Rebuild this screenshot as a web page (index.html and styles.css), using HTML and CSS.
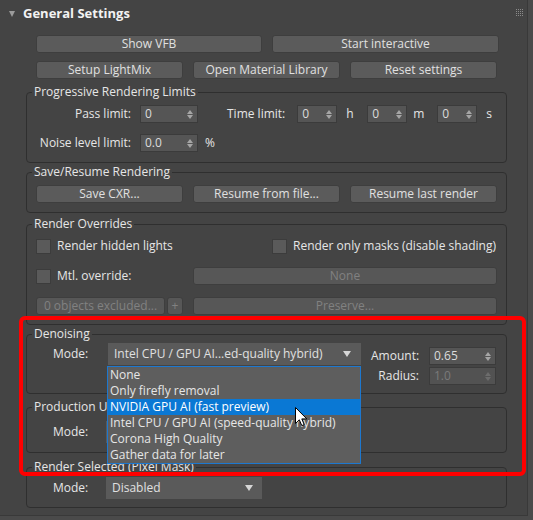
FILE: index.html
```html
<!DOCTYPE html>
<html>
<head>
<meta charset="utf-8">
<link rel="stylesheet" href="styles.css">
</head>
<body>
<div class="panel">
  <div class="title">
    <span class="tri"></span>
    <span class="title-text">General Settings</span>
    <svg class="grip" width="8" height="8" viewBox="0 0 8 8">
      <g fill="#8a8a8a">
        <rect x="0" y="0" width="1" height="1"/><rect x="2" y="0" width="1" height="1"/><rect x="4" y="0" width="1" height="1"/><rect x="6" y="0" width="1" height="1"/>
        <rect x="0" y="2" width="1" height="1"/><rect x="2" y="2" width="1" height="1"/><rect x="4" y="2" width="1" height="1"/><rect x="6" y="2" width="1" height="1"/>
        <rect x="0" y="4" width="1" height="1"/><rect x="2" y="4" width="1" height="1"/><rect x="4" y="4" width="1" height="1"/><rect x="6" y="4" width="1" height="1"/>
        <rect x="0" y="6" width="1" height="1"/><rect x="2" y="6" width="1" height="1"/><rect x="4" y="6" width="1" height="1"/><rect x="6" y="6" width="1" height="1"/>
      </g>
    </svg>
  </div>

  <div class="btnrow top1">
    <button class="btn wide-a">Show VFB</button>
    <button class="btn wide-b">Start interactive</button>
  </div>
  <div class="btnrow top2">
    <button class="btn third">Setup LightMix</button>
    <button class="btn third">Open Material Library</button>
    <button class="btn third">Reset settings</button>
  </div>

  <fieldset class="group g-prog">
    <legend>Progressive Rendering Limits</legend>
    <div class="prow">
      <span class="plabel">Pass limit:</span>
      <div class="spin sp-58"><span class="val">0</span><span class="arrows"><i class="up"></i><i class="dn"></i></span></div>
      <span class="tlabel">Time limit:</span>
      <div class="spin sp-40"><span class="val">0</span><span class="arrows"><i class="up"></i><i class="dn"></i></span></div>
      <span class="unit u-h">h</span>
      <div class="spin sp-40"><span class="val">0</span><span class="arrows"><i class="up"></i><i class="dn"></i></span></div>
      <span class="unit u-m">m</span>
      <div class="spin sp-40"><span class="val">0</span><span class="arrows"><i class="up"></i><i class="dn"></i></span></div>
      <span class="unit u-s">s</span>
    </div>
    <div class="prow r2">
      <span class="plabel">Noise level limit:</span>
      <div class="spin sp-58"><span class="val">0.0</span><span class="arrows"><i class="up"></i><i class="dn"></i></span></div>
      <span class="unit u-pct">%</span>
    </div>
  </fieldset>

  <fieldset class="group g-save">
    <legend>Save/Resume Rendering</legend>
    <div class="btnrow inner">
      <button class="btn third">Save CXR...</button>
      <button class="btn third">Resume from file...</button>
      <button class="btn third">Resume last render</button>
    </div>
  </fieldset>

  <fieldset class="group g-over">
    <legend>Render Overrides</legend>
    <div class="orow o1">
      <label class="chk c-first"><span class="box"></span>Render hidden lights</label>
      <label class="chk c-second"><span class="box"></span><span class="clip">Render only masks (disable shading)</span></label>
    </div>
    <div class="orow o2">
      <label class="chk c-mtl"><span class="box"></span>Mtl. override:</label>
      <button class="btn dis long">None</button>
    </div>
    <div class="orow o3">
      <button class="btn dis excl">0 objects excluded...</button>
      <button class="btn dis plus">+</button>
      <button class="btn dis long">Preserve...</button>
    </div>
  </fieldset>

  <fieldset class="group g-den">
    <legend>Denoising</legend>
    <div class="drow">
      <span class="mlabel">Mode:</span>
      <div class="combo c-den">
        <span class="ctext">Intel CPU / GPU AI...ed-quality hybrid)</span>
        <span class="carrow"></span>
        <ul class="dropdown">
          <li>None</li>
          <li>Only firefly removal</li>
          <li class="sel">NVIDIA GPU AI (fast preview)</li>
          <li>Intel CPU / GPU AI (speed-quality hybrid)</li>
          <li>Corona High Quality</li>
          <li>Gather data for later</li>
        </ul>
      </div>
      <div class="rcol">
        <div class="rrow">
          <span class="rlabel">Amount:</span>
          <div class="spin sp-67"><span class="val">0.65</span><span class="arrows"><i class="up"></i><i class="dn"></i></span></div>
        </div>
        <div class="rrow">
          <span class="rlabel">Radius:</span>
          <div class="spin sp-67 sdis"><span class="val">1.0</span><span class="arrows"><i class="up"></i><i class="dn"></i></span></div>
        </div>
      </div>
    </div>
  </fieldset>

  <fieldset class="group g-prod">
    <legend>Production U</legend>
    <div class="drow">
      <span class="mlabel short">Mode:</span>
      <div class="combo c-small"></div>
    </div>
  </fieldset>

  <fieldset class="group g-sel">
    <legend>Render Selected (Pixel Mask)</legend>
    <div class="drow">
      <span class="mlabel short">Mode:</span>
      <div class="combo c-small">
        <span class="ctext">Disabled</span>
        <span class="carrow"></span>
      </div>
    </div>
  </fieldset>

  <div class="highlight"></div>

  <svg class="cursor" width="13" height="20" viewBox="0 0 13 20">
    <path d="M0.5 0.5 L0.5 16.5 L4.3 12.8 L6.8 18.6 L9.2 17.6 L6.8 11.9 L11.8 11.9 Z" fill="#ffffff" stroke="#000000" stroke-width="1" stroke-linejoin="miter"/>
  </svg>
</div>
</body>
</html>
```

FILE: styles.css
```css
html, body {
  margin: 0;
  padding: 0;
}

body {
  background: #4a4a4a;
  font-family: "Open Sans", "Noto Sans", "DejaVu Sans", sans-serif;
  font-size: 12px;
  line-height: 16px;
  color: #e6e6e6;
}

.panel {
  position: relative;
  width: 528px;
  height: 516px;
  box-sizing: border-box;
  background: #444444;
  border-right: 1px solid #393939;
  border-bottom: 1px solid #393939;
  overflow: hidden;
}

/* Title */
.title {
  height: 26px;
  display: flex;
  align-items: center;
  padding-left: 9px;
}

.tri {
  width: 0;
  height: 0;
  border-left: 3.5px solid transparent;
  border-right: 3.5px solid transparent;
  border-top: 6px solid #9c9c9c;
  margin-right: 8px;
  margin-top: 1px;
}

.title-text {
  font-weight: 700;
  font-size: 13px;
  color: #f2f2f2;
}

.grip {
  margin-left: auto;
  margin-right: 3px;
  margin-top: -1px;
}

/* Buttons */
.btn {
  font-family: inherit;
  font-size: 12px;
  line-height: 16px;
  height: 18px;
  box-sizing: border-box;
  margin: 0;
  padding: 0;
  background: #5b5b5b;
  border: 1px solid #3e3e3e;
  border-radius: 3px;
  color: #e0e0e0;
  text-align: center;
  white-space: nowrap;
  overflow: hidden;
}

.btn.dis {
  color: #818181;
  background: #575757;
}

.btnrow {
  display: flex;
  gap: 10px;
}

.top1 {
  margin-top: 9px;
  padding-left: 36px;
}

.top2 {
  margin-top: 8px;
  padding-left: 36px;
}

.wide-a { width: 226px; }
.wide-b { width: 227px; }
.third { width: 147px; }

/* Groups */
.group {
  margin: 0 0 0 26px;
  width: 481px;
  box-sizing: border-box;
  border: 1px solid #2f2f2f;
  border-radius: 4px;
  padding: 0 8px 0 9px;
  min-width: 0;
}

.group legend {
  padding: 0 2px;
  margin-left: -4px;
  line-height: 16px;
  font-size: 12px;
  color: #e6e6e6;
  white-space: nowrap;
}

.g-prog { margin-top: 5px; padding-bottom: 10px; }
.g-save { margin-top: 1px; padding-bottom: 9px; }
.g-over { margin-top: 3px; padding-bottom: 9px; }
.g-den  { margin-top: 1px; padding-bottom: 8px; }
.g-prod { margin-top: 5px; padding-bottom: 9px; }
.g-sel  { margin-top: 6px; padding-bottom: 8px; }

.btnrow.inner { margin-top: 5px; }

/* Progressive rows */
.prow {
  display: flex;
  align-items: center;
  height: 18px;
  margin-top: 5px;
}

.prow.r2 { margin-top: 11px; }

.plabel {
  width: 95px;
  text-align: right;
  margin-right: 9px;
  white-space: nowrap;
}

.tlabel {
  margin-left: 29px;
  margin-right: 12px;
  white-space: nowrap;
}

.unit { white-space: nowrap; }
.u-h { width: 30px; padding-left: 9px; box-sizing: border-box; }
.u-m { width: 30px; padding-left: 6px; box-sizing: border-box; }
.u-s { padding-left: 9px; }
.u-pct { padding-left: 7px; }

/* Spinner */
.spin {
  height: 18px;
  box-sizing: border-box;
  background: #555555;
  border: 1px solid #3b3b3b;
  display: flex;
  align-items: center;
  padding-left: 4px;
  padding-right: 4px;
  color: #dcdcdc;
}

.spin .val { flex: 1; line-height: 16px; }

.arrows {
  display: flex;
  flex-direction: column;
  gap: 1px;
}

.arrows i {
  display: block;
  width: 0;
  height: 0;
  border-left: 3px solid transparent;
  border-right: 3px solid transparent;
}

.arrows .up { border-bottom: 4px solid #a6a6a6; }
.arrows .dn { border-top: 4px solid #a6a6a6; }

.sp-58 { width: 58px; }
.sp-40 { width: 40px; }
.sp-67 { width: 67px; }

.spin.sdis { color: #7a7a7a; background: #525252; }
.spin.sdis .up { border-bottom-color: #6c6c6c; }
.spin.sdis .dn { border-top-color: #6c6c6c; }

/* Overrides */
.orow {
  display: flex;
  align-items: center;
  height: 18px;
}

.o1 { margin-top: 5px; }
.o2 { margin-top: 12px; }
.o3 { margin-top: 12px; }

.chk {
  display: flex;
  align-items: center;
  white-space: nowrap;
}

.chk .box {
  width: 15px;
  height: 15px;
  box-sizing: border-box;
  background: #5a5a5a;
  border: 1px solid #3c3c3c;
  margin-right: 6px;
  flex: none;
}

.c-first { width: 236px; }
.c-second { width: 226px; overflow: hidden; }
.c-second .clip { overflow: hidden; }
.c-mtl { width: 157px; }

.long { width: 304px; }
.excl { width: 129px; }
.plus { width: 16px; margin-left: 2px; margin-right: 10px; }

/* Denoising & combos */
.drow {
  display: flex;
  align-items: flex-start;
}

.g-den .drow { margin-top: 1px; }
.g-prod .drow { margin-top: 6px; }
.g-sel .drow { margin-top: 2px; }

.mlabel {
  margin-left: 17px;
  width: 55px;
  line-height: 22px;
  flex: none;
}

.mlabel.short { width: 53px; }

.combo {
  position: relative;
  height: 22px;
  box-sizing: border-box;
  background: #5a5a5a;
  display: flex;
  align-items: center;
  padding-left: 6px;
  color: #e0e0e0;
  flex: none;
}

.c-den { width: 253px; }
.c-small { width: 156px; }

.ctext { white-space: nowrap; }

.carrow {
  margin-left: auto;
  margin-right: 10px;
  width: 0;
  height: 0;
  border-left: 4px solid transparent;
  border-right: 4px solid transparent;
  border-top: 6px solid #d6d6d6;
}

.c-small .carrow { margin-right: 9px; }

.rcol {
  margin-left: 10px;
  margin-top: 4px;
  display: flex;
  flex-direction: column;
  gap: 2px;
}

.rrow {
  display: flex;
  align-items: center;
}

.rlabel {
  width: 48px;
  text-align: right;
  margin-right: 10px;
}

/* Dropdown list */
.dropdown {
  position: absolute;
  top: 23px;
  left: -1px;
  width: 254px;
  margin: 0;
  padding: 0;
  list-style: none;
  box-sizing: border-box;
  background: #5e5e5e;
  border: 1px solid #1d78cf;
  z-index: 5;
}

.dropdown li {
  height: 16px;
  line-height: 16px;
  padding-left: 2px;
  color: #e6e6e6;
  white-space: nowrap;
}

.dropdown li.sel {
  background: #0a78d4;
  color: #ffffff;
}

/* Red highlight frame */
.highlight {
  position: absolute;
  left: 19px;
  top: 316px;
  width: 507px;
  height: 160px;
  box-sizing: border-box;
  border: 4px solid #ff0000;
  border-radius: 6px;
  z-index: 8;
  pointer-events: none;
}

/* Mouse cursor */
.cursor {
  position: absolute;
  left: 295px;
  top: 407px;
  z-index: 10;
}
```
